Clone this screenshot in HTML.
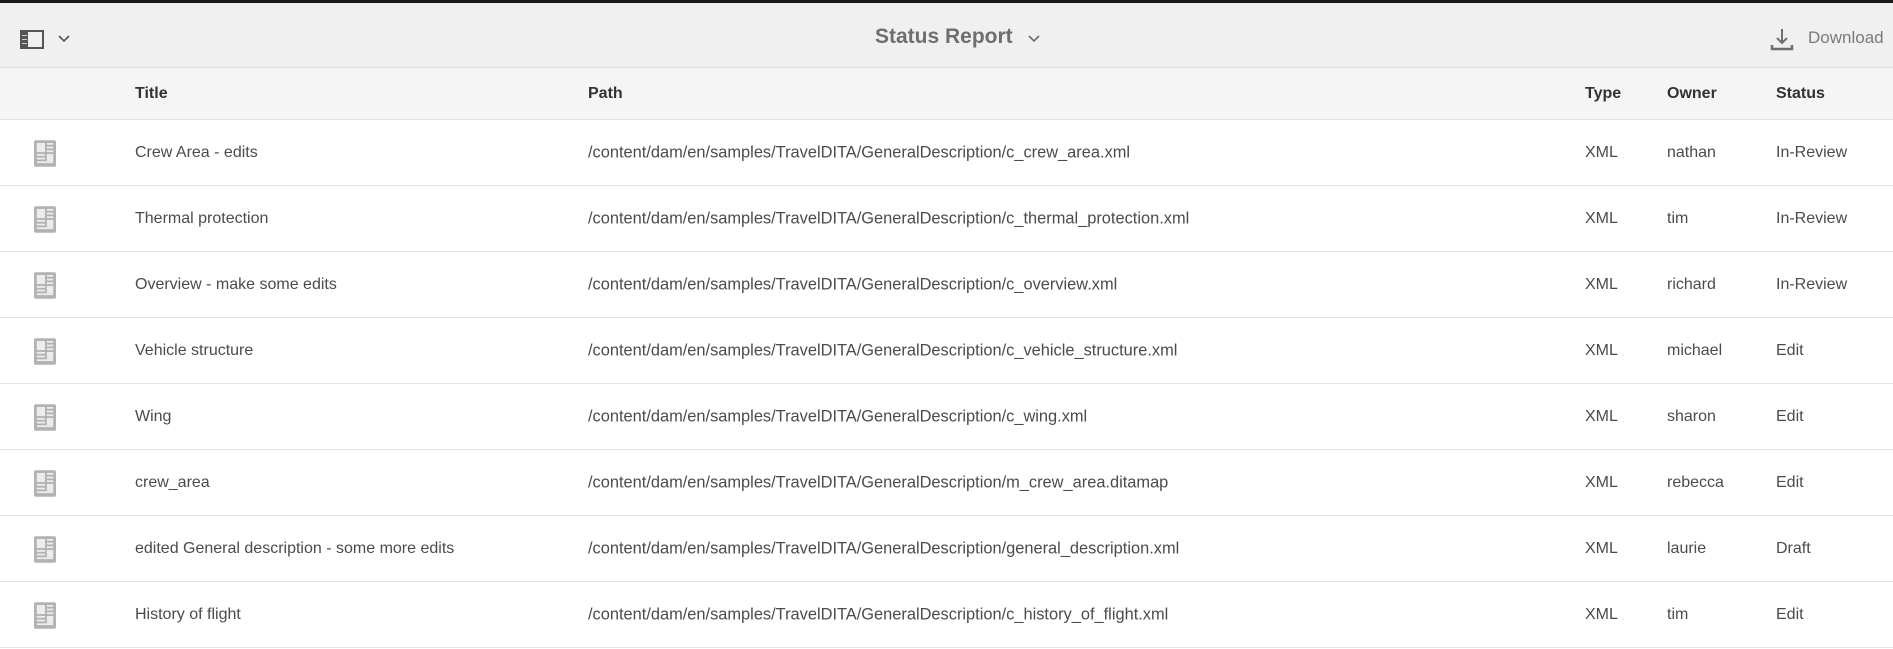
<!DOCTYPE html>
<html><head><style>
body{margin:0;width:1893px;height:649px;overflow:hidden;background:#fff;font-family:"Liberation Sans",sans-serif;color:#4b4b4b}
.top{height:3px;background:#1a1a1a}
.bar{height:64px;background:#f0f0f0;position:relative;border-bottom:1px solid #e1e1e1}
.title{position:absolute;left:875px;top:22px;font-size:21px;font-weight:bold;color:#6e6e6e}
.dl{position:absolute;left:1808px;top:25px;font-size:17px;color:#7a7a7a}
.hdr{height:51px;background:#f5f5f5;border-bottom:1px solid #e1e1e1;position:relative;font-weight:bold;font-size:16px;color:#323232}
.row{height:65px;border-bottom:1px solid #e4e4e4;position:relative;font-size:16px;color:#4b4b4b}
.c{position:absolute;top:50%;transform:translateY(-50%);white-space:nowrap}
.ic{position:absolute;left:34px;top:19px}
</style></head><body>
<div class="top"></div>
<div class="bar">
<svg style="position:absolute;left:20px;top:27px" width="24" height="20" viewBox="0 0 24 20"><rect x="1" y="1" width="22" height="17" fill="none" stroke="#555" stroke-width="2"/><rect x="1" y="1" width="7" height="17" fill="#555"/><rect x="2" y="5" width="5" height="1" fill="#ccc"/><rect x="2" y="9" width="5" height="1" fill="#ccc"/><rect x="2" y="13" width="5" height="1" fill="#ccc"/></svg>
<svg style="position:absolute;left:58px;top:32px" width="12" height="8" viewBox="0 0 12 8"><path d="M1 1l5 5 5-5" fill="none" stroke="#555" stroke-width="1.6"/></svg>
<div class="title">Status Report</div>
<svg style="position:absolute;left:1028px;top:32px" width="12" height="8" viewBox="0 0 12 8"><path d="M1 1l5 5 5-5" fill="none" stroke="#6e6e6e" stroke-width="1.6"/></svg>
<svg style="position:absolute;left:1770px;top:24px" width="24" height="24" viewBox="0 0 24 24"><path d="M12 2v14M7 11l5 5 5-5" fill="none" stroke="#6e6e6e" stroke-width="2"/><path d="M2 18v4h20v-4" fill="none" stroke="#6e6e6e" stroke-width="2.5"/></svg>
<div class="dl">Download</div>
</div>
<div class="hdr">
<span class="c" style="left:135px">Title</span><span class="c" style="left:588px">Path</span><span class="c" style="left:1585px">Type</span><span class="c" style="left:1667px">Owner</span><span class="c" style="left:1776px">Status</span>
</div>
<div id="rows"></div>
<script>
var d=[["Crew Area - edits","c_crew_area.xml","nathan","In-Review"],["Thermal protection","c_thermal_protection.xml","tim","In-Review"],["Overview - make some edits","c_overview.xml","richard","In-Review"],["Vehicle structure","c_vehicle_structure.xml","michael","Edit"],["Wing","c_wing.xml","sharon","Edit"],["crew_area","m_crew_area.ditamap","rebecca","Edit"],["edited General description - some more edits","general_description.xml","laurie","Draft"],["History of flight","c_history_of_flight.xml","tim","Edit"]];
var h="";d.forEach(function(r){h+='<div class="row"><svg class="ic" width="22" height="29" viewBox="0 0 24 29"><rect x="0" y="0" width="24" height="29" rx="2" fill="#b2b2b2"/><rect x="3" y="3" width="9" height="10" fill="#ececec"/><rect x="14" y="3" width="7" height="2" fill="#ececec"/><rect x="14" y="7" width="7" height="2" fill="#ececec"/><rect x="14" y="11" width="7" height="2" fill="#ececec"/><rect x="3" y="15" width="9" height="2" fill="#ececec"/><rect x="3" y="19" width="9" height="2" fill="#ececec"/><rect x="14" y="15" width="7" height="8" fill="#ececec"/><rect x="3" y="23" width="18" height="2" fill="#ececec"/></svg><span class="c" style="left:135px">'+r[0]+'</span><span class="c" style="left:588px;font-size:16.4px">/content/dam/en/samples/TravelDITA/GeneralDescription/'+r[1]+'</span><span class="c" style="left:1585px">XML</span><span class="c" style="left:1667px">'+r[2]+'</span><span class="c" style="left:1776px">'+r[3]+'</span></div>'});
document.getElementById("rows").innerHTML=h;
</script>
</body></html>
